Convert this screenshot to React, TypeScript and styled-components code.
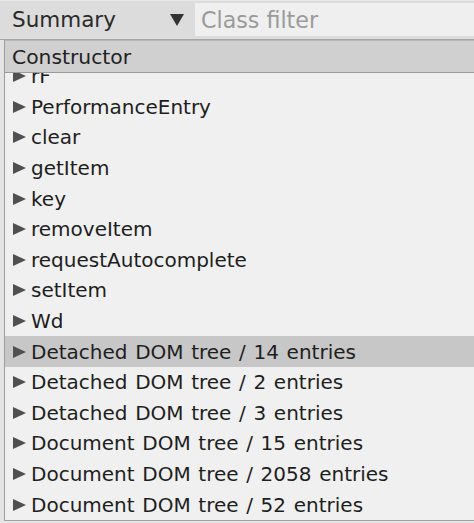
import styled, { createGlobalStyle } from 'styled-components';

const GlobalStyle = createGlobalStyle`
  html, body {
    margin: 0;
    padding: 0;
    background: #e6e6e6;
  }
  body {
    font-family: "DejaVu Sans", "Liberation Sans", sans-serif;
    overflow: hidden;
  }
`;

const Frame = styled.div`
  width: 474px;
  height: 523px;
  padding-left: 4px;
  box-sizing: border-box;
  background: #e4e4e4;
  overflow: hidden;
`;

const Panel = styled.div`
  height: 520px;
  border-left: 1px solid #9c9c9c;
  border-bottom: 1px solid #a4a4a4;
  display: flex;
  flex-direction: column;
  background: #f0f0f0;
`;

const Toolbar = styled.div`
  height: 40px;
  flex: none;
  display: flex;
  align-items: stretch;
  box-sizing: border-box;
  padding: 2px 0 3px 5px;
  margin-left: -5px;
  background: #dcdcdc;
  border-top: 1px solid #e8e8e8;
  border-bottom: 1px solid #a6a6a6;
`;

const Select = styled.div`
  width: 190px;
  flex: none;
  display: flex;
  align-items: center;
  justify-content: space-between;
  padding: 0 11px 0 7px;
  box-sizing: border-box;
  font-size: 21.5px;
  color: #2a2a2a;
`;

const Caret = styled.span`
  width: 0;
  height: 0;
  border-left: 7px solid transparent;
  border-right: 7px solid transparent;
  border-top: 12px solid #333;
`;

const Filter = styled.div`
  flex: 1;
  display: flex;
  align-items: center;
  padding-left: 6px;
  background: #efefef;
  font-size: 22.2px;
  color: #9a9a9a;
`;

const Header = styled.div`
  height: 31px;
  flex: none;
  display: flex;
  align-items: center;
  padding-left: 7px;
  background: #d0d0d0;
  border-top: 1px solid #b8b8b8;
  border-bottom: 1px solid #9a9a9a;
  font-size: 20.3px;
  color: #222;
`;

const List = styled.div`
  flex: 1;
  overflow: hidden;
`;

const Rows = styled.div`
  margin-top: -12px;
`;

const Row = styled.div<{ $selected?: boolean }>`
  height: 30.6px;
  display: flex;
  align-items: center;
  padding-left: 8px;
  background: ${(p) => (p.$selected ? '#c7c7c7' : 'transparent')};
  font-size: 20px;
  word-spacing: 1.3px;
  color: #1e1e1e;
  white-space: nowrap;
`;

const Arrow = styled.span`
  width: 0;
  height: 0;
  margin-right: 5px;
  border-top: 6.5px solid transparent;
  border-bottom: 6.5px solid transparent;
  border-left: 13px solid #505050;
`;

const rows = [
  'rF',
  'PerformanceEntry',
  'clear',
  'getItem',
  'key',
  'removeItem',
  'requestAutocomplete',
  'setItem',
  'Wd',
  'Detached DOM tree / 14 entries',
  'Detached DOM tree / 2 entries',
  'Detached DOM tree / 3 entries',
  'Document DOM tree / 15 entries',
  'Document DOM tree / 2058 entries',
  'Document DOM tree / 52 entries',
];

export default function App() {
  return (
    <>
      <GlobalStyle />
      <Frame>
        <Panel>
          <Toolbar>
            <Select>
              Summary
              <Caret />
            </Select>
            <Filter>Class filter</Filter>
          </Toolbar>
          <Header>Constructor</Header>
          <List>
            <Rows>
              {rows.map((name, i) => (
                <Row key={name} $selected={i === 9}>
                  <Arrow />
                  {name}
                </Row>
              ))}
            </Rows>
          </List>
        </Panel>
      </Frame>
    </>
  );
}
